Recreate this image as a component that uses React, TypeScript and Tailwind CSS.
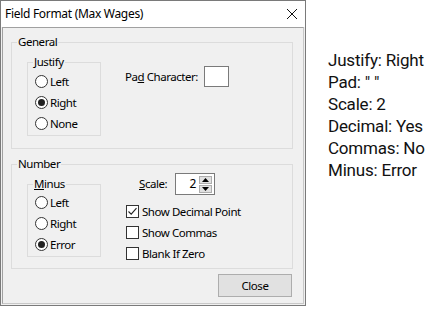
import React from "react";

const dlgFont = { fontFamily: '"Noto Sans", "Open Sans", sans-serif' };

function Radio({ checked, label }: { checked?: boolean; label: React.ReactNode }) {
  return (
    <div className="flex h-[21px] items-center">
      <span className="flex h-[13px] w-[13px] items-center justify-center rounded-full border border-[#333333] bg-white">
        {checked && <span className="h-[7px] w-[7px] rounded-full bg-[#222222]" />}
      </span>
      <span className="ml-[2px]">{label}</span>
    </div>
  );
}

function Check({ checked, label }: { checked?: boolean; label: string }) {
  return (
    <div className="flex h-[21px] items-center">
      <span className="flex h-[13px] w-[13px] items-center justify-center border border-[#333333] bg-white">
        {checked && (
          <svg width="11" height="11" viewBox="0 0 11 11">
            <path d="M1.5 5.5 L4.2 8.2 L9.5 2.2" fill="none" stroke="#222" strokeWidth="1.1" />
          </svg>
        )}
      </span>
      <span className="ml-[3px] whitespace-nowrap">{label}</span>
    </div>
  );
}

function Group({ label, className, children }: { label: React.ReactNode; className: string; children: React.ReactNode }) {
  return (
    <div className={"relative border border-[#dcdcdc] " + className}>
      <span className="absolute left-[5px] top-[-9px] whitespace-nowrap bg-[#f0f0f0] px-[1px] leading-[16px]">{label}</span>
      {children}
    </div>
  );
}

export default function App() {
  return (
    <div className="flex h-[309px] w-[444px] bg-white text-[11.5px] tracking-[-0.45px] text-black" style={dlgFont}>
      <div className="flex h-[306px] w-[306px] flex-col border border-[#7a7a7a]">
        <div className="flex h-[26px] items-center justify-between bg-white pl-[4px] pr-[8px]">
          <span className="text-[12px] tracking-[-0.3px]">Field Format (Max Wages)</span>
          <svg width="10" height="10" viewBox="0 0 10 10">
            <path d="M0 0 L10 10 M10 0 L0 10" stroke="#111" strokeWidth="1" />
          </svg>
        </div>
        <div className="flex flex-1 bg-[#f0f0f0] px-[1px] pb-[1px]">
          <div className="flex flex-1 flex-col border border-[#a0a0a0] border-b-[#c8c8c8] border-r-[#c8c8c8] pl-[8px] pt-[14px]">
            <Group label="General" className="h-[107px] w-[282px]">
              <div className="flex pl-[15px] pt-[19px]">
                <Group label={<><u>J</u>ustify</>} className="h-[74px] w-[74px]">
                  <div className="pl-[7px] pt-[8px]">
                    <Radio label="Left" />
                    <Radio checked label="Right" />
                    <Radio label="None" />
                  </div>
                </Group>
                <div className="ml-[24px] mt-[4px] flex h-[21px] items-center">
                  <span className="w-[79px] whitespace-nowrap">
                    Pa<u>d</u> Character:
                  </span>
                  <span className="h-[21px] w-[25px] border border-[#7a7a7a] bg-white" />
                </div>
              </div>
            </Group>
            <Group label="Number" className="mt-[15px] h-[105px] w-[282px]">
              <div className="flex pl-[15px]">
                <Group label={<><u>M</u>inus</>} className="mt-[19px] h-[73px] w-[74px]">
                  <div className="pl-[7px] pt-[7px]">
                    <Radio label="Left" />
                    <Radio label="Right" />
                    <Radio checked label="Error" />
                  </div>
                </Group>
                <div className="ml-[25px] mt-[8px] flex flex-col">
                  <div className="flex h-[22px] items-center pl-[13px]">
                    <span className="w-[36px]">
                      <u>S</u>cale:
                    </span>
                    <div className="flex h-[22px] w-[40px] items-center border border-[#7a7a7a] bg-white">
                      <span className="flex-1 pr-[3px] text-right text-[12px]">2</span>
                      <div className="mr-[2px] flex flex-col gap-[1px]">
                        <span className="flex h-[8px] w-[13px] items-center justify-center border border-[#adadad] bg-[#e1e1e1]">
                          <svg width="7" height="4" viewBox="0 0 7 4"><path d="M0 4 L3.5 0 L7 4 Z" fill="#000" /></svg>
                        </span>
                        <span className="flex h-[8px] w-[13px] items-center justify-center border border-[#adadad] bg-[#e1e1e1]">
                          <svg width="7" height="4" viewBox="0 0 7 4"><path d="M0 0 L3.5 4 L7 0 Z" fill="#000" /></svg>
                        </span>
                      </div>
                    </div>
                  </div>
                  <div className="mt-[6px] flex flex-col">
                    <Check checked label="Show Decimal Point" />
                    <Check label="Show Commas" />
                    <Check label="Blank If Zero" />
                  </div>
                </div>
              </div>
            </Group>
            <button className="mr-[11px] mt-[5px] flex h-[23px] w-[74px] items-center justify-center self-end border border-[#adadad] bg-[#e1e1e1]">
              Close
            </button>
          </div>
        </div>
      </div>
      <div
        className="ml-[22px] mt-[49px] flex flex-col text-[17px] leading-[22px] tracking-[-0.2px] text-[#111]"
        style={{ fontFamily: 'Roboto, sans-serif' }}
      >
        <span>Justify: Right</span>
        <span>Pad: " "</span>
        <span>Scale: 2</span>
        <span>Decimal: Yes</span>
        <span>Commas: No</span>
        <span>Minus: Error</span>
      </div>
    </div>
  );
}
